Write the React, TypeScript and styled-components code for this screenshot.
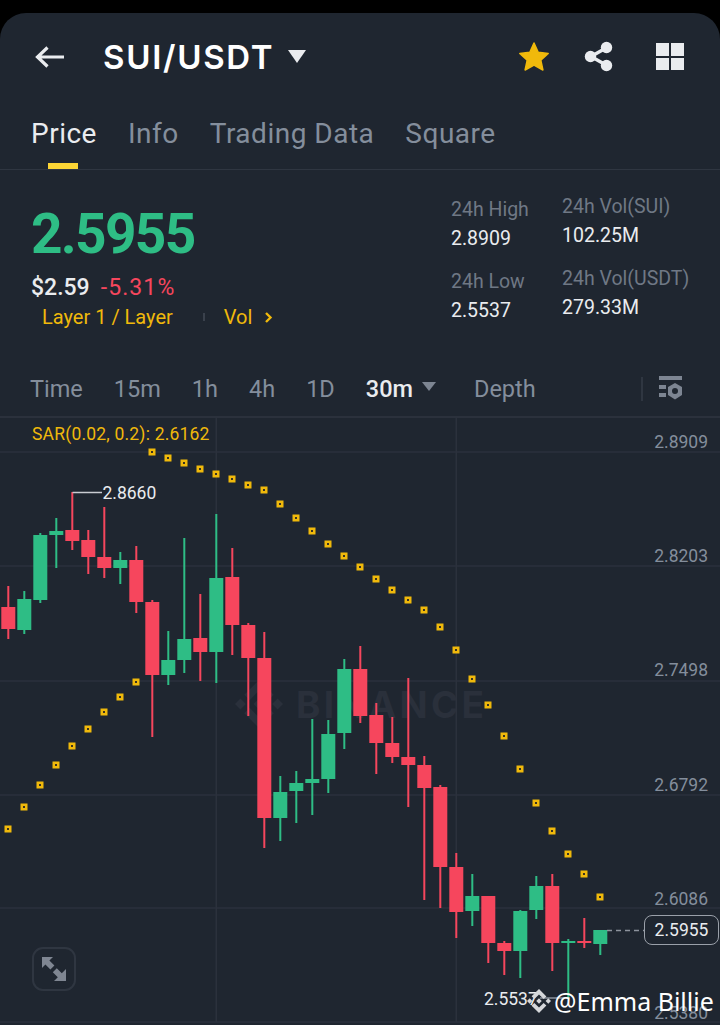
import React from 'react'
import styled, { createGlobalStyle } from 'styled-components'

type Candle = {
  x: number
  high: number
  low: number
  top: number
  bottom: number
  up: boolean
}

const UP = '#2ebd85'
const DOWN = '#f6465d'
const GOLD = '#f0b90b'
const GREY = '#848e9c'
const GRID = '#2b313c'

const c = (
  x: number,
  high: number,
  low: number,
  top: number,
  bottom: number,
  up: boolean
): Candle => ({ x, high, low, top, bottom, up })

// y values are page pixels, the chart's viewBox starts at 418
const candles: Candle[] = [
  c(8, 586, 639, 607, 629, false),
  c(24, 591, 634, 599, 630, true),
  c(40, 533, 603, 535, 600, true),
  c(56, 518, 568, 531, 535, true),
  c(72, 492, 550, 530, 541, false),
  c(88, 530, 574, 540, 557, false),
  c(104, 507, 578, 557, 568, false),
  c(120, 552, 584, 560, 568, true),
  c(136, 546, 613, 560, 602, false),
  c(152, 600, 737, 602, 675, false),
  c(168, 631, 685, 660, 675, true),
  c(184, 538, 673, 639, 660, true),
  c(200, 594, 681, 638, 652, false),
  c(216, 514, 683, 578, 652, true),
  c(232, 548, 655, 577, 625, false),
  c(248, 623, 716, 625, 658, false),
  c(264, 632, 848, 658, 818, false),
  c(280, 776, 841, 792, 818, true),
  c(296, 771, 823, 783, 791, true),
  c(312, 719, 815, 779, 783, true),
  c(328, 720, 793, 734, 779, true),
  c(344, 659, 749, 669, 733, true),
  c(360, 646, 723, 669, 716, false),
  c(376, 703, 774, 715, 743, false),
  c(392, 717, 763, 743, 757, false),
  c(408, 678, 807, 757, 765, false),
  c(424, 756, 900, 765, 788, false),
  c(440, 785, 908, 787, 867, false),
  c(456, 853, 938, 867, 912, false),
  c(472, 874, 926, 896, 911, true),
  c(488, 896, 963, 896, 943, false),
  c(504, 941, 975, 943, 951, false),
  c(520, 910, 978, 911, 951, true),
  c(536, 876, 919, 886, 910, true),
  c(552, 874, 971, 886, 943, false),
  c(568, 939, 998, 941, 943, true),
  c(584, 918, 948, 941, 943, false),
  c(600, 930, 955, 930, 944, true),
]

const sarDots: [number, number][] = [
  [8, 829], [24, 807], [40, 785], [56, 765], [72, 746], [88, 729], [104, 712], [120, 697], [136, 682],
  [152, 452], [168, 458], [184, 463], [200, 469], [216, 474], [232, 479], [248, 485], [264, 490],
  [280, 504], [296, 518], [312, 531], [328, 544], [344, 556], [360, 567], [376, 579], [392, 590],
  [408, 600], [424, 610], [440, 627], [456, 650], [472, 679], [488, 705], [504, 736], [520, 769],
  [536, 803], [552, 831], [568, 854], [584, 874], [600, 897],
]

const gridRows = [452, 566, 681, 795, 908, 1022]
const axisPrices = [
  { label: '2.8909', y: 442 },
  { label: '2.8203', y: 556 },
  { label: '2.7498', y: 670 },
  { label: '2.6792', y: 785 },
  { label: '2.6086', y: 899 },
  { label: '2.5380', y: 1013 },
]

const tabs = ['Price', 'Info', 'Trading Data', 'Square']
const intervals = ['Time', '15m', '1h', '4h', '1D']

const BinanceLogo = ({ size, color }: { size: number; color: string }) => (
  <svg width={size} height={size} viewBox="0 0 126.61 126.61" fill={color}>
    <path d="M38.73 53.2l24.59-24.58 24.6 24.6 14.3-14.31L63.32 0 24.43 38.88l14.3 14.32z" />
    <path d="M0 63.31l14.3-14.31 14.31 14.31-14.31 14.3z" />
    <path d="M38.73 73.41l24.59 24.59 24.6-24.6 14.31 14.29-38.9 38.91-38.9-38.88-.02-.02 14.32-14.29z" />
    <path d="M98 63.31l14.3-14.31 14.31 14.3-14.31 14.32z" />
    <path d="M77.83 63.3L63.32 48.78 52.59 59.51l-1.24 1.23-2.54 2.54 14.51 14.5 14.51-14.47z" />
  </svg>
)

const ChartDrawing = () => (
  <ChartSvg viewBox="0 418 720 607">
    {gridRows.map((y) => (
      <rect key={y} x={0} y={y - 0.75} width={720} height={1.5} fill={GRID} />
    ))}
    <rect x={215.5} y={418} width={1.5} height={604} fill={GRID} />
    <rect x={455.5} y={418} width={1.5} height={604} fill={GRID} />
    {candles.map((k) => (
      <g key={k.x} fill={k.up ? UP : DOWN}>
        <rect x={k.x - 0.7} y={k.high} width={2} height={k.low - k.high} />
        <rect x={k.x - 6.7} y={k.top} width={14} height={k.bottom - k.top} />
      </g>
    ))}
    {sarDots.map(([x, y]) => (
      <g key={x}>
        <rect x={x - 3.5} y={y - 3.5} width={7} height={7} fill={GOLD} />
        <rect x={x - 1} y={y - 1} width={2} height={2} fill="#3a3320" />
      </g>
    ))}
    <path d="M72.5 492.5H102" stroke="#c9ccd2" strokeWidth={1.5} fill="none" />
    <path d="M607 930.5H644" stroke="#8d939d" strokeWidth={1.5} strokeDasharray="5 4" fill="none" />
    <path d="M540 998H568" stroke="#8d939d" strokeWidth={1.5} fill="none" />
  </ChartSvg>
)

export default function App() {
  return (
    <>
      <GlobalStyle />
      <Page>
        <Panel>
          <Header>
            <BackIcon viewBox="0 0 30 24">
              <path
                d="M29 12H3M12.5 2.5L2.5 12l10 9.5"
                fill="none"
                stroke="#eaecef"
                strokeWidth={3.2}
              />
            </BackIcon>
            <Title>SUI/USDT</Title>
            <TitleCaret />
            <HeaderIcons>
              <svg width={32} height={31} viewBox="0 0 32 31">
                <path
                  d="M16 2l4.2 9.3 10 1.1-7.4 6.8 2.1 9.8L16 24l-8.9 5 2.1-9.8-7.4-6.8 10-1.1z"
                  fill={GOLD}
                  stroke={GOLD}
                  strokeWidth={1.5}
                  strokeLinejoin="round"
                />
              </svg>
              <svg width={29} height={31} viewBox="0 0 29 31">
                <path d="M22 7L7 15.5 22 24" fill="none" stroke="#eaecef" strokeWidth={3.4} />
                <circle cx={22.5} cy={6.5} r={5.7} fill="#eaecef" />
                <circle cx={6.5} cy={15.5} r={5.7} fill="#eaecef" />
                <circle cx={22.5} cy={24.5} r={5.7} fill="#eaecef" />
              </svg>
              <GridIcon width={28} height={27} viewBox="0 0 28 27" fill="#eaecef">
                <rect x={0} y={0} width={13} height={13} />
                <rect x={15} y={0} width={13} height={13} />
                <rect x={0} y={15} width={13} height={12.5} />
                <rect x={15} y={15} width={13} height={12.5} />
              </GridIcon>
            </HeaderIcons>
          </Header>

          <TabBar>
            {tabs.map((t, i) => (
              <Tab key={t} $active={i === 0}>
                {t}
              </Tab>
            ))}
          </TabBar>

          <Stats>
            <PriceBlock>
              <LastPrice>2.5955</LastPrice>
              <PriceRow>
                <Usd>$2.59</Usd>
                <Change>-5.31%</Change>
              </PriceRow>
              <TagRow>
                <span>Layer 1 / Layer</span>
                <TagDivider />
                <span>Vol</span>
                <svg width={9} height={13} viewBox="0 0 9 13">
                  <path d="M2 2l4.5 4.5L2 11" fill="none" stroke={GOLD} strokeWidth={2.4} />
                </svg>
              </TagRow>
            </PriceBlock>
            <StatColumn $width={111} $shift={0}>
              <StatLabel>24h High</StatLabel>
              <StatValue>2.8909</StatValue>
              <StatLabel>24h Low</StatLabel>
              <StatValue>2.5537</StatValue>
            </StatColumn>
            <StatColumn $width={147} $shift={-3}>
              <StatLabel>24h Vol(SUI)</StatLabel>
              <StatValue>102.25M</StatValue>
              <StatLabel>24h Vol(USDT)</StatLabel>
              <StatValue>279.33M</StatValue>
            </StatColumn>
          </Stats>

          <IntervalBar>
            {intervals.map((t) => (
              <Interval key={t}>{t}</Interval>
            ))}
            <ActiveInterval>
              30m
              <IntervalCaret />
            </ActiveInterval>
            <DepthLabel>Depth</DepthLabel>
            <BarDivider />
            <svg width={24} height={25} viewBox="0 0 24 25" fill="#7d8592">
              <rect x={0} y={0} width={23} height={4} />
              <rect x={0} y={9} width={7} height={4} />
              <rect x={0} y={17} width={7} height={4} />
              <path
                fillRule="evenodd"
                d="M16 7l7 4v8l-7 4.5L9 19v-8zM16 12a3 3 0 100 6 3 3 0 000-6z"
              />
            </svg>
          </IntervalBar>

          <Chart>
            <Watermark>
              <BinanceLogo size={48} color="#2a303b" />
              <WatermarkText>BINANCE</WatermarkText>
            </Watermark>
            <ChartDrawing />
            <SarLabel>SAR(0.02, 0.2): 2.6162</SarLabel>
            <HighLabel>2.8660</HighLabel>
            {axisPrices.map((p) => (
              <AxisPrice key={p.label} style={{ top: p.y - 418 - 11 }}>
                {p.label}
              </AxisPrice>
            ))}
            <LowLabel>2.5537</LowLabel>
            <LastTag>2.5955</LastTag>
            <ExpandButton>
              <svg width={26} height={26} viewBox="0 0 26 26" fill="#7f8692">
                <path d="M1 1h11l-3.6 3.6 5 5-4 4-5-5L1 12z" />
                <path d="M25 25H13l3.8-3.8-5-5 4-4 5 5L25 13z" />
              </svg>
            </ExpandButton>
            <Credit>
              <BinanceLogo size={24} color="#d5d7da" />
              <CreditText>@Emma Billie</CreditText>
            </Credit>
          </Chart>
        </Panel>
      </Page>
    </>
  )
}

const GlobalStyle = createGlobalStyle`
  html, body {
    margin: 0;
    padding: 0;
    background: #000;
  }
`

const Page = styled.div`
  width: 720px;
  height: 1025px;
  overflow: hidden;
  background: #000;
  padding-top: 13px;
  box-sizing: border-box;
  font-family: Roboto, 'Noto Sans', sans-serif;
`

const Panel = styled.div`
  height: 1012px;
  display: flex;
  flex-direction: column;
  background: #1f2630;
  border-radius: 26px 26px 0 0;
  overflow: hidden;
`

const Header = styled.header`
  height: 87px;
  flex: none;
  display: flex;
  align-items: center;
  padding: 0 36px 0 35px;
  box-sizing: border-box;
`

const BackIcon = styled.svg`
  width: 30px;
  height: 24px;
  margin-right: 38px;
`

const Title = styled.h1`
  margin: 0;
  font-family: Inter, Roboto, sans-serif;
  font-size: 33px;
  font-weight: 600;
  letter-spacing: 1.7px;
  color: #fff;
`

const TitleCaret = styled.span`
  width: 0;
  height: 0;
  margin-left: 14px;
  border-left: 9px solid transparent;
  border-right: 9px solid transparent;
  border-top: 13px solid #eaecef;
`

const HeaderIcons = styled.div`
  margin-left: auto;
  display: flex;
  align-items: center;
  gap: 34px;
`

const GridIcon = styled.svg`
  margin-left: 9px;
`

const TabBar = styled.nav`
  height: 70px;
  flex: none;
  display: flex;
  gap: 31px;
  padding: 15px 0 0 31px;
  box-sizing: border-box;
  border-bottom: 1px solid #2f3641;
`

const Tab = styled.div<{ $active: boolean }>`
  position: relative;
  font-size: 28px;
  line-height: 38px;
  font-weight: 400;
  letter-spacing: 0.5px;
  color: ${(p) => (p.$active ? '#eaecef' : GREY)};

  ${(p) =>
    p.$active &&
    `
    &::after {
      content: '';
      position: absolute;
      left: 17px;
      bottom: 0;
      width: 30px;
      height: 6px;
      background: #fcd535;
    }
  `}
`

const Stats = styled.section`
  height: 185px;
  flex: none;
  display: flex;
  padding: 26px 0 0 0;
  box-sizing: border-box;
`

const PriceBlock = styled.div`
  width: 451px;
  padding-left: 31px;
  box-sizing: border-box;
`

const LastPrice = styled.div`
  font-size: 55px;
  line-height: 76px;
  font-weight: 700;
  color: ${UP};
  letter-spacing: -1.7px;
`

const PriceRow = styled.div`
  display: flex;
  gap: 11px;
  font-size: 23px;
  line-height: 30px;
  margin-top: 1px;
`

const Usd = styled.span`
  color: #eaecef;
  font-weight: 500;
`

const Change = styled.span`
  color: ${DOWN};
  letter-spacing: 1.1px;
`

const TagRow = styled.div`
  display: flex;
  align-items: center;
  margin: 0 0 0 11px;
  font-size: 20px;
  line-height: 28px;
  color: ${GOLD};

  svg {
    margin-left: 12px;
  }
`

const TagDivider = styled.i`
  width: 2px;
  height: 8px;
  margin: 0 19px 0 30px;
  background: #3a414c;
`

const StatColumn = styled.div<{ $width: number; $shift: number }>`
  width: ${(p) => p.$width}px;
  margin-top: ${(p) => p.$shift}px;
`

const StatLabel = styled.div`
  font-size: 19.5px;
  line-height: 28px;
  color: #6f7885;
`

const StatValue = styled.div`
  font-size: 19.5px;
  line-height: 28px;
  color: #eaecef;
  padding-top: 1px;
  margin-bottom: 15px;
`

const IntervalBar = styled.div`
  height: 63px;
  flex: none;
  display: flex;
  align-items: center;
  gap: 31px;
  padding: 6px 37px 0 30px;
  box-sizing: border-box;
  border-bottom: 2px solid #2b313c;
  font-size: 23.5px;
`

const Interval = styled.span`
  color: ${GREY};
`

const ActiveInterval = styled.span`
  display: flex;
  align-items: center;
  color: #eaecef;
  font-weight: 500;
`

const IntervalCaret = styled.i`
  width: 0;
  height: 0;
  margin: -4px 0 0 9px;
  border-left: 7px solid transparent;
  border-right: 7px solid transparent;
  border-top: 9px solid #7d8592;
`

const DepthLabel = styled.span`
  color: ${GREY};
  margin-left: 7px;
`

const BarDivider = styled.i`
  width: 2px;
  height: 24px;
  margin-left: auto;
  margin-right: -15px;
  background: #2f3641;
`

const Chart = styled.div`
  position: relative;
  flex: 1;
  min-height: 0;
`

const ChartSvg = styled.svg`
  display: block;
  position: relative;
  width: 720px;
  height: 607px;
`

const Watermark = styled.div`
  position: absolute;
  left: 235px;
  top: 262px;
  display: flex;
  align-items: center;
  gap: 13px;
`

const WatermarkText = styled.span`
  font-family: Inter, sans-serif;
  font-size: 37px;
  font-weight: 700;
  letter-spacing: 3.2px;
  color: #2a303b;
`

const SarLabel = styled.div`
  position: absolute;
  left: 32px;
  top: 6px;
  font-size: 17.5px;
  line-height: 20px;
  letter-spacing: 0.2px;
  color: ${GOLD};
`

const HighLabel = styled.div`
  position: absolute;
  left: 102.5px;
  top: 64px;
  font-size: 17.5px;
  line-height: 22px;
  color: #eaecef;
`

const AxisPrice = styled.div`
  position: absolute;
  right: 12px;
  font-size: 17.5px;
  line-height: 22px;
  color: ${GREY};
`

const LowLabel = styled.div`
  position: absolute;
  left: 484px;
  top: 570px;
  font-size: 17.5px;
  line-height: 22px;
  color: #eaecef;
`

const LastTag = styled.div`
  position: absolute;
  left: 644px;
  top: 497px;
  width: 75px;
  height: 30px;
  border: 1.5px solid #9aa0a9;
  border-radius: 8px;
  box-sizing: border-box;
  background: #1f2630;
  text-align: center;
  font-size: 17.5px;
  line-height: 28px;
  color: #eaecef;
`

const ExpandButton = styled.div`
  position: absolute;
  left: 32px;
  top: 529px;
  width: 44px;
  height: 44px;
  display: flex;
  align-items: center;
  justify-content: center;
  border: 2px solid #2f3641;
  border-radius: 11px;
  box-sizing: border-box;
`

const Credit = styled.div`
  position: absolute;
  left: 527px;
  top: 568px;
  display: flex;
  align-items: center;
  gap: 3px;
`

const CreditText = styled.span`
  font-family: 'Noto Sans', sans-serif;
  font-size: 25px;
  line-height: 30px;
  color: #fff;
`
